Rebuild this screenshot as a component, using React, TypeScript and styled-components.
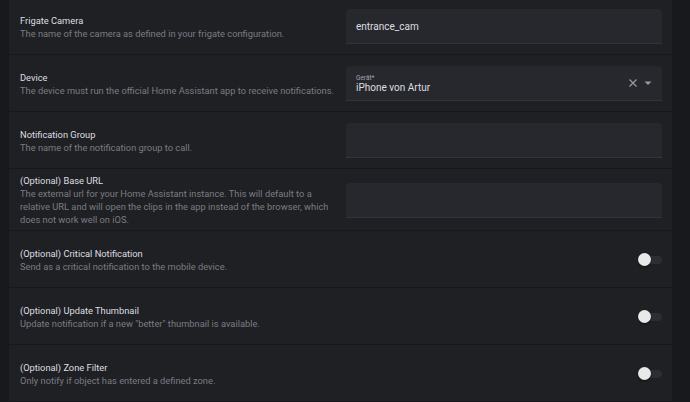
import React from "react";
import styled, { createGlobalStyle } from "styled-components";

const GlobalStyle = createGlobalStyle`
  html, body {
    margin: 0;
    padding: 0;
    background: #18191c;
    overflow: hidden;
  }
  body {
    font-family: Roboto, "Liberation Sans", sans-serif;
  }
`;

const Page = styled.div`
  width: 690px;
  height: 402px;
  overflow: hidden;
  background: #18191c;
`;

const Card = styled.div`
  margin: -2px 0 0 9px;
  width: 663px;
  background: #1f2024;
`;

const Row = styled.div`
  display: grid;
  grid-template-columns: 326px 316px;
  align-items: center;
  box-sizing: border-box;
  min-height: 57px;
  padding: 5px 10px 4px 11px;
  border-bottom: 1px solid #17181b;
`;

const Info = styled.div`
  display: flex;
  flex-direction: column;
  padding-right: 8px;
`;

const Title = styled.div`
  font-size: 9.3px;
  line-height: 13px;
  color: #dedee0;
`;

const Description = styled.div`
  font-size: 9.3px;
  line-height: 13px;
  color: #7a7c83;
`;

const Field = styled.div`
  height: 35px;
  box-sizing: border-box;
  border-radius: 4px 4px 0 0;
  background: #27282e;
  border-bottom: 1px solid #33343a;
  display: flex;
  align-items: center;
  padding: 0 10px;
`;

const FieldText = styled.div`
  font-size: 10px;
  color: #dedee0;
`;

const SelectValue = styled.div`
  flex: 1;
  display: flex;
  flex-direction: column;
  padding-top: 1px;
`;

const FloatLabel = styled.div`
  font-size: 6.5px;
  line-height: 8px;
  color: #a3a4aa;
`;

const SelectText = styled.div`
  font-size: 10px;
  line-height: 12px;
  color: #dedee0;
`;

const Icons = styled.div`
  display: flex;
  align-items: center;
  gap: 5px;
  margin-right: -1px;
`;

const SwitchWrap = styled.div`
  justify-self: end;
  position: relative;
  width: 24px;
  height: 14px;
`;

const Track = styled.div`
  position: absolute;
  left: 4px;
  right: 0;
  top: 3px;
  height: 8px;
  border-radius: 4px;
  background: #2d2e34;
`;

const Thumb = styled.div`
  position: absolute;
  left: 0;
  top: 0;
  width: 13px;
  height: 13px;
  border-radius: 50%;
  background: #e9e9ea;
  box-shadow: 0 1px 2px rgba(0, 0, 0, 0.6);
`;

const Switch = () => (
  <SwitchWrap>
    <Track />
    <Thumb />
  </SwitchWrap>
);

const rows: {
  title: string;
  description: string;
  control: "text" | "select" | "empty" | "switch";
  value?: string;
}[] = [
  {
    title: "Frigate Camera",
    description: "The name of the camera as defined in your frigate configuration.",
    control: "text",
    value: "entrance_cam",
  },
  {
    title: "Device",
    description:
      "The device must run the official Home Assistant app to receive notifications.",
    control: "select",
    value: "iPhone von Artur",
  },
  {
    title: "Notification Group",
    description: "The name of the notification group to call.",
    control: "empty",
  },
  {
    title: "(Optional) Base URL",
    description:
      "The external url for your Home Assistant instance. This will default to a relative URL and will open the clips in the app instead of the browser, which does not work well on iOS.",
    control: "empty",
  },
  {
    title: "(Optional) Critical Notification",
    description: "Send as a critical notification to the mobile device.",
    control: "switch",
  },
  {
    title: "(Optional) Update Thumbnail",
    description: 'Update notification if a new "better" thumbnail is available.',
    control: "switch",
  },
  {
    title: "(Optional) Zone Filter",
    description: "Only notify if object has entered a defined zone.",
    control: "switch",
  },
];

export default function App() {
  return (
    <Page>
      <GlobalStyle />
      <Card>
        {rows.map((row) => (
          <Row key={row.title}>
            <Info>
              <Title>{row.title}</Title>
              <Description>{row.description}</Description>
            </Info>
            {row.control === "text" && (
              <Field>
                <FieldText>{row.value}</FieldText>
              </Field>
            )}
            {row.control === "select" && (
              <Field>
                <SelectValue>
                  <FloatLabel>Gerät*</FloatLabel>
                  <SelectText>{row.value}</SelectText>
                </SelectValue>
                <Icons>
                  <svg width="10" height="10" viewBox="0 0 10 10">
                    <path
                      d="M1.5 1.5 L8.5 8.5 M8.5 1.5 L1.5 8.5"
                      stroke="#9a9ba1"
                      strokeWidth="1.2"
                    />
                  </svg>
                  <svg width="10" height="10" viewBox="0 0 10 10">
                    <path d="M1.5 3.5 L8.5 3.5 L5 7 Z" fill="#9a9ba1" />
                  </svg>
                </Icons>
              </Field>
            )}
            {row.control === "empty" && <Field />}
            {row.control === "switch" && <Switch />}
          </Row>
        ))}
      </Card>
    </Page>
  );
}
